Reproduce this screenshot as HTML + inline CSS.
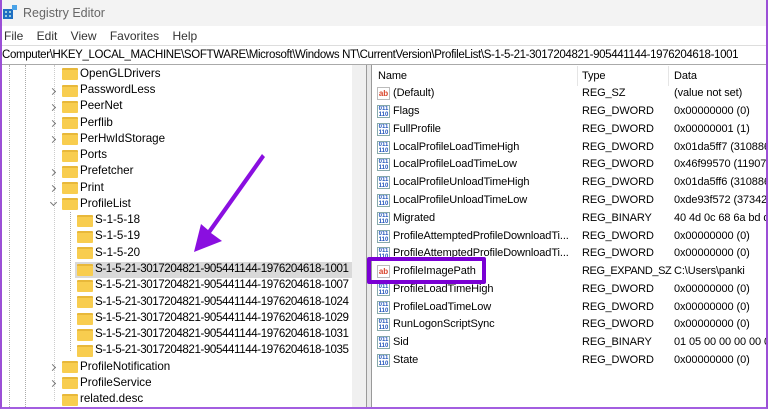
<!DOCTYPE html>
<html><head><meta charset="utf-8"><style>
*{margin:0;padding:0;box-sizing:border-box}
body{width:768px;height:409px;overflow:hidden;background:#fff;font-family:"Liberation Sans",sans-serif;color:#000;position:relative}
.frame{position:absolute;inset:0;border:2px solid #9b4fd6;border-top:none;border-bottom:2px solid #a35ee0;pointer-events:none;z-index:10}
.t{position:absolute;white-space:nowrap;font-size:11.6px;line-height:14px}
.r{font-size:11px;letter-spacing:-0.1px}
.fold{position:absolute;width:16px;height:12px;background:#f8cd4f;border-top:2px solid #e8b83a;border-radius:1px}
.chev{position:absolute;width:5px;height:5px;border-right:1px solid #777;border-bottom:1px solid #777;transform:rotate(-45deg)}
.ab{position:absolute;width:13px;height:13px;border:1px solid #bbb;background:#fff;font-size:8px;font-weight:bold;color:#d9442b;line-height:11px;text-align:center}
.bin{position:absolute;width:13px;height:13px;border:1px solid #8aa;background:#fff;font-size:6px;line-height:6px;color:#2255bb;font-weight:bold;text-align:center;overflow:hidden}
</style></head><body>
<div style="position:absolute;left:0;top:0;width:768px;height:26px;background:#f3f3f3"></div>
<svg style="position:absolute;left:3px;top:5px" width="14" height="14"><rect x="0" y="4" width="10" height="10" fill="#1f6fc2"/><rect x="2" y="6" width="2" height="2" fill="#9cd"/><rect x="6" y="6" width="2" height="2" fill="#9cd"/><rect x="2" y="10" width="2" height="2" fill="#9cd"/><rect x="6" y="10" width="2" height="2" fill="#9cd"/><rect x="9" y="0" width="5" height="5" fill="#4aa3e8"/></svg>
<div class="t" style="left:23px;top:6px;font-size:12.5px;color:#666">Registry Editor</div>
<div style="position:absolute;left:0;top:26px;width:768px;height:19px;background:#fff"></div>
<div class="t" style="left:4px;top:29px;font-size:12px;color:#333">File&nbsp;&nbsp;&nbsp;&nbsp;Edit&nbsp;&nbsp;&nbsp;&nbsp;View&nbsp;&nbsp;&nbsp;&nbsp;Favorites&nbsp;&nbsp;&nbsp;&nbsp;Help</div>
<div style="position:absolute;left:0;top:45px;width:768px;height:20px;border-top:1px solid #ddd;border-bottom:1px solid #aaa"></div>
<div class="t" style="left:2px;top:48px;font-size:11.5px;letter-spacing:-0.35px">Computer\HKEY_LOCAL_MACHINE\SOFTWARE\Microsoft\Windows NT\CurrentVersion\ProfileList\S-1-5-21-3017204821-905441144-1976204618-1001</div>
<!-- left pane -->
<div style="position:absolute;left:352px;top:65px;width:14px;height:344px;background:#f0f0f0"></div>
<div style="position:absolute;left:366px;top:65px;width:6px;height:344px;background:#e8e8e8;border-left:1px solid #999;border-right:1px solid #999"></div>
<div style="position:absolute;left:9px;top:65px;height:344px;border-left:1px dotted #aaa"></div>
<div style="position:absolute;left:25px;top:65px;height:344px;border-left:1px dotted #aaa"></div>
<div style="position:absolute;left:54px;top:65px;height:336px;border-left:1px dotted #ccc"></div>
<div style="position:absolute;left:70px;top:212px;height:139px;border-left:1px dotted #aaa"></div>
<div style="position:absolute;left:75px;top:262px;width:277px;height:16px;background:#d9d9d9"></div>

<div class="fold" style="left:62px;top:68px"></div><div class="t" style="left:80px;top:67px">OpenGLDrivers</div>
<div class="chev" style="left:50px;top:89px"></div><div class="fold" style="left:62px;top:85px"></div><div class="t" style="left:80px;top:83px">PasswordLess</div>
<div class="chev" style="left:50px;top:105px"></div><div class="fold" style="left:62px;top:101px"></div><div class="t" style="left:80px;top:99px">PeerNet</div>
<div class="chev" style="left:50px;top:121px"></div><div class="fold" style="left:62px;top:117px"></div><div class="t" style="left:80px;top:116px">Perflib</div>
<div class="chev" style="left:50px;top:137px"></div><div class="fold" style="left:62px;top:133px"></div><div class="t" style="left:80px;top:132px">PerHwIdStorage</div>
<div class="fold" style="left:62px;top:150px"></div><div class="t" style="left:80px;top:148px">Ports</div>
<div class="chev" style="left:50px;top:170px"></div><div class="fold" style="left:62px;top:166px"></div><div class="t" style="left:80px;top:164px">Prefetcher</div>
<div class="chev" style="left:50px;top:186px"></div><div class="fold" style="left:62px;top:182px"></div><div class="t" style="left:80px;top:181px">Print</div>
<div class="chev" style="left:51px;top:200px;transform:rotate(45deg)"></div><div class="fold" style="left:62px;top:198px"></div><div class="t" style="left:80px;top:197px">ProfileList</div>
<div class="fold" style="left:77px;top:215px"></div><div class="t" style="left:95px;top:213px">S-1-5-18</div>
<div class="fold" style="left:77px;top:231px"></div><div class="t" style="left:95px;top:229px">S-1-5-19</div>
<div class="fold" style="left:77px;top:247px"></div><div class="t" style="left:95px;top:246px">S-1-5-20</div>
<div class="fold" style="left:77px;top:264px"></div><div class="t" style="left:95px;top:262px;letter-spacing:-0.42px">S-1-5-21-3017204821-905441144-1976204618-1001</div>
<div class="fold" style="left:77px;top:280px"></div><div class="t" style="left:95px;top:278px;letter-spacing:-0.42px">S-1-5-21-3017204821-905441144-1976204618-1007</div>
<div class="fold" style="left:77px;top:296px"></div><div class="t" style="left:95px;top:295px;letter-spacing:-0.42px">S-1-5-21-3017204821-905441144-1976204618-1024</div>
<div class="fold" style="left:77px;top:313px"></div><div class="t" style="left:95px;top:311px;letter-spacing:-0.42px">S-1-5-21-3017204821-905441144-1976204618-1029</div>
<div class="fold" style="left:77px;top:329px"></div><div class="t" style="left:95px;top:327px;letter-spacing:-0.42px">S-1-5-21-3017204821-905441144-1976204618-1031</div>
<div class="fold" style="left:77px;top:345px"></div><div class="t" style="left:95px;top:343px;letter-spacing:-0.42px">S-1-5-21-3017204821-905441144-1976204618-1035</div>
<div class="chev" style="left:50px;top:365px"></div><div class="fold" style="left:62px;top:361px"></div><div class="t" style="left:80px;top:360px">ProfileNotification</div>
<div class="chev" style="left:50px;top:381px"></div><div class="fold" style="left:62px;top:377px"></div><div class="t" style="left:80px;top:376px">ProfileService</div>
<div class="fold" style="left:62px;top:394px"></div><div class="t" style="left:80px;top:392px">related.desc</div>

<!-- right pane -->
<div class="t r" style="left:378px;top:69px">Name</div>
<div style="position:absolute;left:577px;top:66px;height:20px;border-left:1px solid #e5e5e5"></div>
<div class="t r" style="left:582px;top:69px">Type</div>
<div style="position:absolute;left:668px;top:66px;height:20px;border-left:1px solid #e5e5e5"></div>
<div class="t r" style="left:674px;top:69px">Data</div>

<div class="ab" style="left:377px;top:87px">ab</div><div class="t r" style="left:393px;top:86px">(Default)</div><div class="t r" style="left:582px;top:86px">REG_SZ</div><div class="t r" style="left:674px;top:86px">(value not set)</div>
<div class="bin" style="left:377px;top:105px">011<br>110</div><div class="t r" style="left:393px;top:104px">Flags</div><div class="t r" style="left:582px;top:104px">REG_DWORD</div><div class="t r" style="left:674px;top:104px">0x00000000 (0)</div>
<div class="bin" style="left:377px;top:123px">011<br>110</div><div class="t r" style="left:393px;top:122px">FullProfile</div><div class="t r" style="left:582px;top:122px">REG_DWORD</div><div class="t r" style="left:674px;top:122px">0x00000001 (1)</div>
<div class="bin" style="left:377px;top:141px">011<br>110</div><div class="t r" style="left:393px;top:140px">LocalProfileLoadTimeHigh</div><div class="t r" style="left:582px;top:140px">REG_DWORD</div><div class="t r" style="left:674px;top:140px">0x01da5ff7 (310886</div>
<div class="bin" style="left:377px;top:158px">011<br>110</div><div class="t r" style="left:393px;top:157px">LocalProfileLoadTimeLow</div><div class="t r" style="left:582px;top:157px">REG_DWORD</div><div class="t r" style="left:674px;top:157px">0x46f99570 (119076</div>
<div class="bin" style="left:377px;top:176px">011<br>110</div><div class="t r" style="left:393px;top:175px">LocalProfileUnloadTimeHigh</div><div class="t r" style="left:582px;top:175px">REG_DWORD</div><div class="t r" style="left:674px;top:175px">0x01da5ff6 (310886</div>
<div class="bin" style="left:377px;top:194px">011<br>110</div><div class="t r" style="left:393px;top:193px">LocalProfileUnloadTimeLow</div><div class="t r" style="left:582px;top:193px">REG_DWORD</div><div class="t r" style="left:674px;top:193px">0xde93f572 (373427</div>
<div class="bin" style="left:377px;top:212px">011<br>110</div><div class="t r" style="left:393px;top:211px">Migrated</div><div class="t r" style="left:582px;top:211px">REG_BINARY</div><div class="t r" style="left:674px;top:211px">40 4d 0c 68 6a bd d</div>
<div class="bin" style="left:377px;top:230px">011<br>110</div><div class="t r" style="left:393px;top:229px">ProfileAttemptedProfileDownloadTi...</div><div class="t r" style="left:582px;top:229px">REG_DWORD</div><div class="t r" style="left:674px;top:229px">0x00000000 (0)</div>
<div class="bin" style="left:377px;top:247px">011<br>110</div><div class="t r" style="left:393px;top:246px">ProfileAttemptedProfileDownloadTi...</div><div class="t r" style="left:582px;top:246px">REG_DWORD</div><div class="t r" style="left:674px;top:246px">0x00000000 (0)</div>
<div class="ab" style="left:377px;top:265px">ab</div><div class="t r" style="left:393px;top:264px">ProfileImagePath</div><div class="t r" style="left:582px;top:264px;letter-spacing:-0.4px">REG_EXPAND_SZ</div><div class="t r" style="left:674px;top:264px">C:\Users\panki</div>
<div class="bin" style="left:377px;top:283px">011<br>110</div><div class="t r" style="left:393px;top:282px">ProfileLoadTimeHigh</div><div class="t r" style="left:582px;top:282px">REG_DWORD</div><div class="t r" style="left:674px;top:282px">0x00000000 (0)</div>
<div class="bin" style="left:377px;top:301px">011<br>110</div><div class="t r" style="left:393px;top:300px">ProfileLoadTimeLow</div><div class="t r" style="left:582px;top:300px">REG_DWORD</div><div class="t r" style="left:674px;top:300px">0x00000000 (0)</div>
<div class="bin" style="left:377px;top:318px">011<br>110</div><div class="t r" style="left:393px;top:317px">RunLogonScriptSync</div><div class="t r" style="left:582px;top:317px">REG_DWORD</div><div class="t r" style="left:674px;top:317px">0x00000000 (0)</div>
<div class="bin" style="left:377px;top:336px">011<br>110</div><div class="t r" style="left:393px;top:335px">Sid</div><div class="t r" style="left:582px;top:335px">REG_BINARY</div><div class="t r" style="left:674px;top:335px">01 05 00 00 00 00 0</div>
<div class="bin" style="left:377px;top:354px">011<br>110</div><div class="t r" style="left:393px;top:353px">State</div><div class="t r" style="left:582px;top:353px">REG_DWORD</div><div class="t r" style="left:674px;top:353px">0x00000000 (0)</div>

<div style="position:absolute;left:367px;top:257px;width:119px;height:27px;border:4px solid #7a00d4;border-radius:2px;z-index:5"></div>
<svg style="position:absolute;left:0;top:0;z-index:6" width="768" height="409"><path d="M262 154 L265 157 L211 233 L222 241 L194 252 L201 224 L208 230 Z" fill="#8a0fe0"/></svg>
<div class="frame"></div>
</body></html>
